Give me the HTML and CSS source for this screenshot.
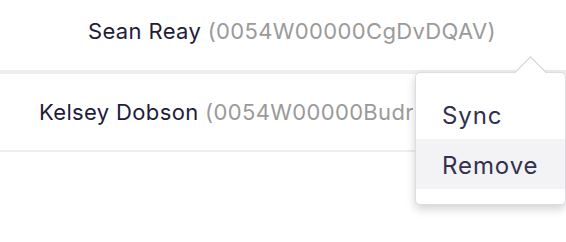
FILE: index.html
```
<!DOCTYPE html>
<html>
<head>
<meta charset="utf-8">
<link rel="stylesheet" href="styles.css">
</head>
<body>
<div class="list">
  <div class="row row-first">
    <span class="name">Sean Reay</span> <span class="id">(0054W00000CgDvDQAV)</span>
  </div>
  <div class="row row-second">
    <div class="cell"><span class="name">Kelsey Dobson</span> <span class="id">(0054W00000BudrQQAR)</span></div>
  </div>
</div>
<div class="menu">
  <div class="arrow"></div>
  <div class="item">Sync</div>
  <div class="item active">Remove</div>
</div>
</body>
</html>
```
FILE: styles.css
```
html, body {
  margin: 0;
  padding: 0;
  background: #ffffff;
  font-family: Inter, "Noto Sans", sans-serif;
  overflow: hidden;
}
.list {
  width: 566px;
}
.row {
  font-size: 22px;
  line-height: 30px;
  letter-spacing: 0.35px;
  white-space: nowrap;
  overflow: hidden;
}
.row-first {
  height: 54px;
  padding-top: 16px;
  padding-left: 88px;
  border-bottom: 4px solid #eeeeee;
}
.row-second {
  height: 53px;
  padding-top: 23px;
  padding-left: 39px;
  border-bottom: 2px solid #eeeeee;
}
.cell {
  width: 374px;
  overflow: hidden;
}
.name {
  color: #1e1c3a;
}
.id {
  color: #9a9a9a;
}
.menu {
  position: absolute;
  left: 415px;
  top: 72px;
  width: 149px;
  padding: 16px 0 15px;
  background: #ffffff;
  border: 1px solid #dcdce2;
  border-radius: 5px;
  box-shadow: 0 4px 10px rgba(0, 0, 0, 0.18);
}
.arrow {
  position: absolute;
  left: 103px;
  top: -12px;
  width: 22px;
  height: 22px;
  background: #ffffff;
  border-top: 1px solid #cfcfdb;
  border-left: 1px solid #cfcfdb;
  transform: rotate(45deg);
}
.item {
  position: relative;
  height: 50px;
  line-height: 54px;
  padding-left: 26px;
  font-size: 24px;
  letter-spacing: 0.9px;
  color: #33314f;
}
.item.active {
  background: #f3f3f6;
}
```
